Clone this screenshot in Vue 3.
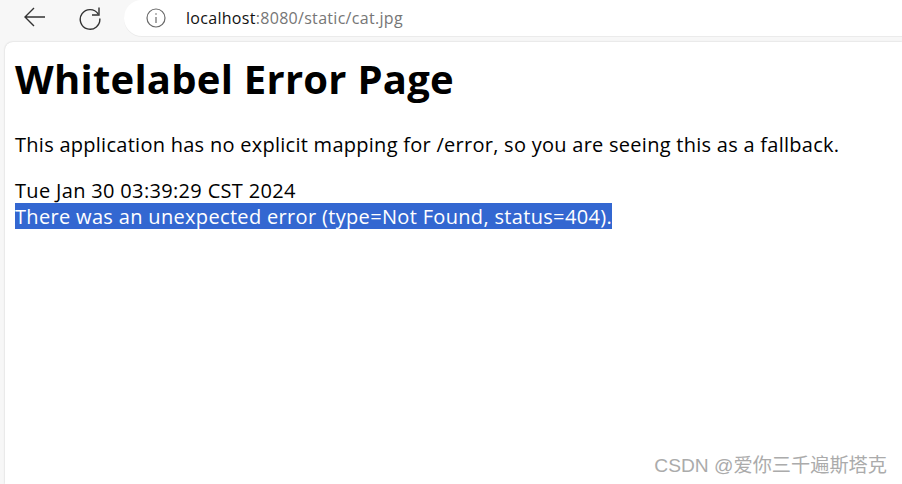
<script setup>
const host = "localhost";
const rest = ":8080/static/cat.jpg";
</script>

<template>
  <div class="window">
    <header class="toolbar">
      <button class="nav back">
        <svg width="26" height="22" viewBox="0 0 26 22" fill="none" stroke="#333" stroke-width="1.4">
          <path d="M3 11H23M12 2L3 11L12 20" />
        </svg>
      </button>
      <button class="nav reload">
        <svg width="24" height="24" viewBox="0 0 24 24" fill="none" stroke="#333" stroke-width="1.4">
          <path d="M20.2 8A9.8 9.8 0 1 0 21.8 12.5" />
          <path d="M21 1.5V9H14" />
        </svg>
      </button>
      <div class="address">
        <svg class="info" width="20" height="20" viewBox="0 0 20 20" fill="none" stroke="#6a6a6a" stroke-width="1.2">
          <circle cx="10" cy="10" r="9" />
          <path d="M10 9V15M10 5.2V6.8" />
        </svg>
        <span class="url"><span class="host">{{ host }}</span>{{ rest }}</span>
      </div>
    </header>
    <main class="page">
      <h1>Whitelabel Error Page</h1>
      <p class="intro">This application has no explicit mapping for /error, so you are seeing this as a fallback.</p>
      <div class="date">Tue Jan 30 03:39:29 CST 2024</div>
      <div class="detail">There was an unexpected error (type=Not Found, status=404).</div>
      <div class="watermark">CSDN @爱你三千遍斯塔克</div>
    </main>
  </div>
</template>

<style>
html,
body {
  margin: 0;
  overflow: hidden;
}
</style>

<style scoped>
.window {
  width: 902px;
  height: 484px;
  display: flex;
  flex-direction: column;
  background: #f7f7f7;
  font-family: "Open Sans", "Noto Sans CJK SC", sans-serif;
  overflow: hidden;
}

.toolbar {
  height: 42px;
  flex-shrink: 0;
  display: flex;
  align-items: flex-start;
}

.nav {
  border: none;
  background: none;
  padding: 0;
  display: flex;
  align-items: center;
  justify-content: center;
}
.back {
  width: 26px;
  height: 22px;
  margin: 6px 0 0 22px;
}
.reload {
  width: 24px;
  height: 24px;
  margin: 6px 0 0 30px;
}

.address {
  flex: 1;
  height: 36px;
  margin-left: 22px;
  padding-left: 22px;
  display: flex;
  align-items: center;
  gap: 20px;
  background: #fff;
  border-radius: 18px 0 0 18px;
  box-shadow: 0 1px 0 #ebebeb;
}

.info {
  flex-shrink: 0;
}

.url {
  font-size: 16px;
  letter-spacing: 0.3px;
  color: #767676;
}
.host {
  color: #111;
}

.page {
  position: relative;
  flex: 1;
  margin-left: 5px;
  padding: 0 0 0 10px;
  background: #fff;
  border-top-left-radius: 8px;
  box-shadow: 0 0 2px rgba(0, 0, 0, 0.2);
  color: #000;
}

h1 {
  margin: 10px 0 0;
  font-size: 40px;
  line-height: 54px;
  font-weight: 700;
  letter-spacing: 0.25px;
}

.intro {
  margin: 25px 0 0;
  font-size: 20px;
  line-height: 27px;
  letter-spacing: 0.27px;
}

.date,
.detail {
  height: 26px;
  font-size: 20px;
  line-height: 28px;
  letter-spacing: 0.33px;
}
.date {
  margin-top: 19px;
}

.detail {
  width: fit-content;
  background: #3367d1;
  color: #fff;
}

.watermark {
  position: absolute;
  right: 15px;
  bottom: 6px;
  font-size: 19.2px;
  color: #ababab;
  font-family: "Liberation Sans", "Noto Sans CJK SC", sans-serif;
}
</style>
